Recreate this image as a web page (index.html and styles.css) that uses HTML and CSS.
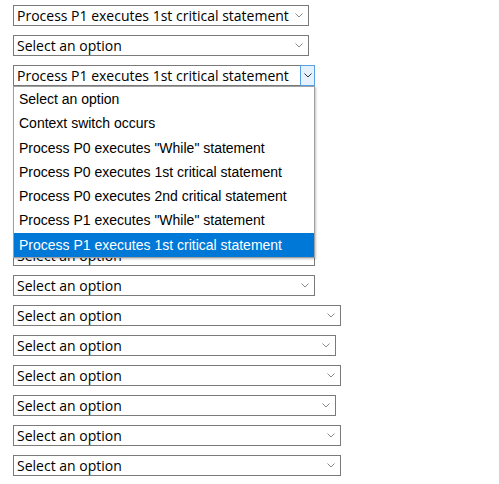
FILE: index.html
```html
<!DOCTYPE html>
<html>
<head>
<meta charset="utf-8">
<link rel="stylesheet" href="styles.css">
</head>
<body>
<div class="form">
  <div class="sel w296"><span class="val">Process P1 executes 1st critical statement</span><svg class="chev" viewBox="0 0 8 5"><path d="M0.5 0.5 L4 4 L7.5 0.5"/></svg></div>
  <div class="sel w296"><span class="val">Select an option</span><svg class="chev" viewBox="0 0 8 5"><path d="M0.5 0.5 L4 4 L7.5 0.5"/></svg></div>
  <div class="sel w302 open"><span class="val">Process P1 executes 1st critical statement</span><span class="btn"><svg class="chev" viewBox="0 0 8 5"><path d="M0.5 0.5 L4 4 L7.5 0.5"/></svg></span>
    <ul class="list">
      <li>Select an option</li>
      <li>Context switch occurs</li>
      <li>Process P0 executes "While" statement</li>
      <li>Process P0 executes 1st critical statement</li>
      <li>Process P0 executes 2nd critical statement</li>
      <li>Process P1 executes "While" statement</li>
      <li class="hl">Process P1 executes 1st critical statement</li>
    </ul>
  </div>
  <div class="sel w302"><span class="val">Select an option</span><svg class="chev" viewBox="0 0 8 5"><path d="M0.5 0.5 L4 4 L7.5 0.5"/></svg></div>
  <div class="sel w302"><span class="val">Select an option</span><svg class="chev" viewBox="0 0 8 5"><path d="M0.5 0.5 L4 4 L7.5 0.5"/></svg></div>
  <div class="sel w302"><span class="val">Select an option</span><svg class="chev" viewBox="0 0 8 5"><path d="M0.5 0.5 L4 4 L7.5 0.5"/></svg></div>
  <div class="sel w302"><span class="val">Select an option</span><svg class="chev" viewBox="0 0 8 5"><path d="M0.5 0.5 L4 4 L7.5 0.5"/></svg></div>
  <div class="sel w302"><span class="val">Select an option</span><svg class="chev" viewBox="0 0 8 5"><path d="M0.5 0.5 L4 4 L7.5 0.5"/></svg></div>
  <div class="sel w302"><span class="val">Select an option</span><svg class="chev" viewBox="0 0 8 5"><path d="M0.5 0.5 L4 4 L7.5 0.5"/></svg></div>
  <div class="sel w302"><span class="val">Select an option</span><svg class="chev" viewBox="0 0 8 5"><path d="M0.5 0.5 L4 4 L7.5 0.5"/></svg></div>
  <div class="sel w328"><span class="val">Select an option</span><svg class="chev" viewBox="0 0 8 5"><path d="M0.5 0.5 L4 4 L7.5 0.5"/></svg></div>
  <div class="sel w323"><span class="val">Select an option</span><svg class="chev" viewBox="0 0 8 5"><path d="M0.5 0.5 L4 4 L7.5 0.5"/></svg></div>
  <div class="sel w328"><span class="val">Select an option</span><svg class="chev" viewBox="0 0 8 5"><path d="M0.5 0.5 L4 4 L7.5 0.5"/></svg></div>
  <div class="sel w323"><span class="val">Select an option</span><svg class="chev" viewBox="0 0 8 5"><path d="M0.5 0.5 L4 4 L7.5 0.5"/></svg></div>
  <div class="sel w328"><span class="val">Select an option</span><svg class="chev" viewBox="0 0 8 5"><path d="M0.5 0.5 L4 4 L7.5 0.5"/></svg></div>
  <div class="sel w328"><span class="val">Select an option</span><svg class="chev" viewBox="0 0 8 5"><path d="M0.5 0.5 L4 4 L7.5 0.5"/></svg></div>
</div>
</body>
</html>
```
FILE: styles.css
```css
html, body {
  margin: 0;
  padding: 0;
  background: #ffffff;
}
.form {
  display: flex;
  flex-direction: column;
  align-items: flex-start;
  gap: 9px;
  padding: 5px 0 0 13px;
}
.sel {
  position: relative;
  box-sizing: border-box;
  height: 21px;
  border: 1px solid #7a7a7a;
  background: #fff;
  display: flex;
  align-items: center;
  justify-content: space-between;
  padding: 0 5px 0 3px;
  font-family: "Open Sans", sans-serif;
  font-size: 14px;
  color: #000;
}
.w296 { width: 296px; }
.w302 { width: 302px; }
.w323 { width: 323px; }
.w328 { width: 328px; }
.val {
  white-space: nowrap;
  line-height: 19px;
}
.chev {
  width: 8px;
  height: 5px;
  flex: none;
  fill: none;
  stroke: #8a8a8a;
  stroke-width: 1;
}
.open {
  padding-right: 0;
}
.btn {
  box-sizing: border-box;
  align-self: stretch;
  width: 15px;
  margin: -1px -1px -1px 0;
  height: 21px;
  border: 1px solid #56a0e8;
  background: #e5f1fb;
  display: flex;
  align-items: center;
  justify-content: center;
}
.btn .chev {
  stroke: #333;
}
.list {
  position: absolute;
  z-index: 5;
  left: -1px;
  top: 20px;
  box-sizing: border-box;
  width: 302px;
  margin: 0;
  padding: 0;
  list-style: none;
  background: #fff;
  border: 1px solid #a0a0a0;
  box-shadow: 1px 1px 2px rgba(0,0,0,0.25);
  font-family: "Liberation Sans", Arial, sans-serif;
  font-size: 14px;
}
.list li {
  height: 24.3px;
  line-height: 24px;
  padding-left: 5px;
  color: #000;
  white-space: nowrap;
}
.list li.hl {
  background: #0078d7;
  color: #fff;
}
```
